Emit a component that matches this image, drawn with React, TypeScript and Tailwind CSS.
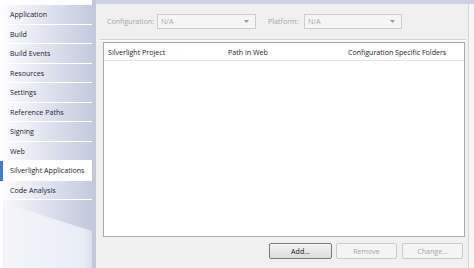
import { twMerge } from "tailwind-merge";

const tabs = [
  "Application",
  "Build",
  "Build Events",
  "Resources",
  "Settings",
  "Reference Paths",
  "Signing",
  "Web",
  "Silverlight Applications",
  "Code Analysis",
];

const ComboBox = ({ width }: { width: string }) => (
  <div
    className={twMerge(
      "flex h-[15px] items-center justify-between border border-[#cdcdcd] bg-[#f5f5f5] pl-[3px] pr-[6px] text-[#a6a6a6]",
      width
    )}
  >
    <span>N/A</span>
    <svg width="5" height="3" viewBox="0 0 5 3">
      <polygon points="0,0 5,0 2.5,3" fill="#9a9a9a" />
    </svg>
  </div>
);

const Button = ({
  label,
  disabled,
  className,
}: {
  label: string;
  disabled?: boolean;
  className?: string;
}) => (
  <button
    disabled={disabled}
    className={twMerge(
      "flex h-[16px] items-center justify-center rounded-[2px] border",
      disabled
        ? "border-[#cbcbcb] bg-[#f4f4f4] text-[#a8a8a8]"
        : "border-[#7a7a7a] bg-gradient-to-b from-[#f3f3f3] to-[#dcdcdc] text-[#1b1b1b]",
      className
    )}
  >
    {label}
  </button>
);

const App = () => {
  return (
    <div className="flex h-[268px] w-[474px] overflow-hidden bg-white font-['Open_Sans',sans-serif] text-[7.1px] text-[#1a2232]">
      <aside className="flex w-[92px] flex-col pt-[5px]">
        {tabs.map((tab, i) => {
          const selected = tab === "Silverlight Applications";
          return (
            <div key={tab} className="flex h-[19.5px]">
              <div className={selected ? "w-[3px] bg-[#3b7dd8]" : "w-[3px]"} />
              <div
                className={twMerge(
                  "flex flex-1 items-center border-b border-white pl-[7px] pt-[1px]",
                  selected
                    ? "bg-white"
                    : "bg-gradient-to-r from-[#fbfcfe] to-[#c4cadf]",
                  i === 0 ? "rounded-tl-[3px]" : ""
                )}
              >
                {tab}
              </div>
            </div>
          );
        })}
        <div className="flex flex-1 pl-[3px]">
          <svg
            className="h-full w-full"
            viewBox="0 0 89 68"
            preserveAspectRatio="none"
          >
            <defs>
              <linearGradient id="tabfill" x1="0" x2="1" y1="0" y2="0">
                <stop offset="0" stopColor="#f7f8fc" />
                <stop offset="1" stopColor="#c2c8dd" />
              </linearGradient>
              <linearGradient id="lowfill" x1="0" x2="1" y1="0" y2="0">
                <stop offset="0" stopColor="#f3f5fa" />
                <stop offset="0.9" stopColor="#e9edf6" />
                <stop offset="1" stopColor="#dbe0ed" />
              </linearGradient>
            </defs>
            <rect width="89" height="68" fill="url(#lowfill)" />
            <polygon points="0,0 89,0 89,31 0,3" fill="url(#tabfill)" />
          </svg>
        </div>
      </aside>

      <div className="w-[4px] bg-[#c3c8da]" />

      <main className="flex flex-1 border-t-[4px] border-[#cdd1e2] bg-[#f0f0f0]">
        <div className="flex flex-1 flex-col">
          <div className="mt-[10px] flex items-center pl-[11px] text-[#a6a6a6]">
            <span className="w-[50px]">Configuration:</span>
            <ComboBox width="w-[99px]" />
            <span className="ml-[12px] w-[36px]">Platform:</span>
            <ComboBox width="w-[98px]" />
          </div>

          <div className="ml-[4px] mr-[2px] mt-[10px] h-[2px] border-t border-b border-t-[#d3d3d3] border-b-white" />

          <div className="ml-[7px] mr-[3px] mt-[1px] h-[195px] border border-[#a9a9a9] bg-white">
            <div className="grid h-[18px] grid-cols-[120px_120px_1fr] items-center border-b border-[#e4e4e4] pl-[4px] pt-[1px]">
              <span>Silverlight Project</span>
              <span>Path in Web</span>
              <span>Configuration Specific Folders</span>
            </div>
          </div>

          <div className="mt-[6px] flex justify-end pr-[5px]">
            <Button label="Add..." className="w-[63px]" />
            <Button label="Remove" disabled className="ml-[4px] w-[61px]" />
            <Button label="Change..." disabled className="ml-[5px] w-[61px]" />
          </div>
        </div>
        <div className="w-[6px] border-l border-[#d7d7d7] bg-[#f6f6f6]" />
      </main>
    </div>
  );
};

export default App;
